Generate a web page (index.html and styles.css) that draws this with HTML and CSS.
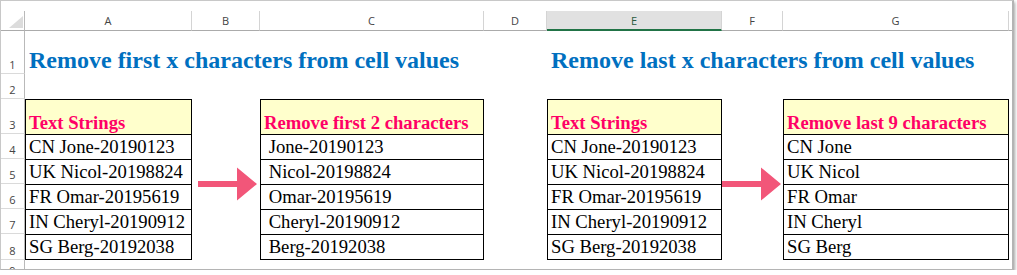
FILE: index.html
```html
<!DOCTYPE html>
<html>
<head>
<meta charset="utf-8">
<link rel="stylesheet" href="styles.css">
</head>
<body>
<div class="frame">
  <div class="topgap"></div>
  <div class="colhdr">
    <div class="ch corner"><div class="tri"></div></div>
    <div class="ch">A</div>
    <div class="ch">B</div>
    <div class="ch">C</div>
    <div class="ch">D</div>
    <div class="ch sel">E</div>
    <div class="ch">F</div>
    <div class="ch">G</div>
    <div class="ch rest"></div>
  </div>
  <div class="sheet">
    <div class="rh r1">1</div>
    <div class="rh r2">2</div>
    <div class="rh r3">3</div>
    <div class="rh r4">4</div>
    <div class="rh r5">5</div>
    <div class="rh r6">6</div>
    <div class="rh r7">7</div>
    <div class="rh r8">8</div>
    <div class="rh r9">9</div>

    <div class="title t1">Remove first x characters from cell values</div>
    <div class="title t2">Remove last x characters from cell values</div>

    <div class="tbl ca">
      <div class="th">Text Strings</div>
      <div class="td">CN Jone-20190123</div>
      <div class="td">UK Nicol-20198824</div>
      <div class="td">FR Omar-20195619</div>
      <div class="td">IN Cheryl-20190912</div>
      <div class="td">SG Berg-20192038</div>
    </div>

    <svg class="arrow ab" width="68" height="50" viewBox="0 0 68 50"><path d="M6 22 H45 V8.5 L65 25 L45 41.5 V28 H6 Z" fill="#f25679"/></svg>

    <div class="tbl cc">
      <div class="th">Remove first 2 characters</div>
      <div class="td"> Jone-20190123</div>
      <div class="td"> Nicol-20198824</div>
      <div class="td"> Omar-20195619</div>
      <div class="td"> Cheryl-20190912</div>
      <div class="td"> Berg-20192038</div>
    </div>

    <div class="tbl ce">
      <div class="th">Text Strings</div>
      <div class="td">CN Jone-20190123</div>
      <div class="td">UK Nicol-20198824</div>
      <div class="td">FR Omar-20195619</div>
      <div class="td">IN Cheryl-20190912</div>
      <div class="td">SG Berg-20192038</div>
    </div>

    <svg class="arrow af" width="61" height="50" viewBox="0 0 61 50"><path d="M0 22 H39 V8.5 L59 25 L39 41.5 V28 H0 Z" fill="#f25679"/></svg>

    <div class="tbl cg">
      <div class="th">Remove last 9 characters</div>
      <div class="td">CN Jone</div>
      <div class="td">UK Nicol</div>
      <div class="td">FR Omar</div>
      <div class="td">IN Cheryl</div>
      <div class="td">SG Berg</div>
    </div>
  </div>
</div>
</body>
</html>
```
FILE: styles.css
```css
* { box-sizing: border-box; }

body {
  margin: 0;
  background: #ffffff;
}

.frame {
  --cols: 24px 167px 68px 224px 63px 175px 61px 226px 1fr;
  width: 1014px;
  height: 270px;
  border: 1px solid #c8c8c8;
  border-right: 2px solid #b4b4b4;
  border-bottom: 1px solid #b4b4b4;
  box-shadow: 1px 2px 3px rgba(0, 0, 0, 0.35);
  background: #ffffff;
  overflow: hidden;
}

.topgap {
  height: 10px;
}

.colhdr {
  display: grid;
  grid-template-columns: var(--cols);
  height: 20px;
}

.ch {
  border-right: 1px solid #d4d4d4;
  border-bottom: 1px solid #ababab;
  display: flex;
  align-items: center;
  justify-content: center;
  font-family: "Open Sans", "DejaVu Sans", sans-serif;
  font-size: 11px;
  line-height: 13px;
  color: #444444;
}

.ch.corner {
  border-right-color: #b9b9b9;
  justify-content: flex-end;
  align-items: flex-end;
  padding: 0 1px 2px 0;
}

.tri {
  width: 14px;
  height: 12px;
  background: #dcdcdc;
  clip-path: polygon(100% 0, 100% 100%, 0 100%);
}

.ch.sel {
  background: #e1e1e1;
  border-bottom: 2px solid #217346;
  color: #2b5b3d;
}

.ch.rest {
  border-right: none;
}

.sheet {
  display: grid;
  grid-template-columns: var(--cols);
  grid-template-rows: 43px 25px 35px 25px 25px 25px 25px 26px 20px;
}

.rh {
  grid-column: 1;
  border-right: 1px solid #b9b9b9;
  border-bottom: 1px solid #dadada;
  display: flex;
  align-items: flex-end;
  justify-content: center;
  padding-bottom: 2px;
  font-family: "Open Sans", "DejaVu Sans", sans-serif;
  font-size: 11px;
  line-height: 13px;
  color: #444444;
}

.r1 { grid-row: 1; }
.r2 { grid-row: 2; }
.r3 { grid-row: 3; }
.r4 { grid-row: 4; }
.r5 { grid-row: 5; }
.r6 { grid-row: 6; }
.r7 { grid-row: 7; }
.r8 { grid-row: 8; }
.r9 { grid-row: 9; }

.title {
  grid-row: 1;
  align-self: end;
  font-family: "Liberation Serif", Tinos, "Times New Roman", "DejaVu Serif", serif;
  font-weight: bold;
  font-size: 24px;
  line-height: 24px;
  color: #0070c0;
  white-space: nowrap;
  padding: 0 0 2px 4px;
}

.t1 { grid-column: 2 / 6; }
.t2 { grid-column: 6 / 10; }

.tbl {
  grid-row: 3 / 9;
  display: flex;
  flex-direction: column;
  border: 1px solid #000000;
  font-family: "Liberation Serif", Tinos, "Times New Roman", "DejaVu Serif", serif;
  font-size: 18.67px;
}

.ca { grid-column: 2; }
.cc { grid-column: 4; }
.ce { grid-column: 6; }
.cg { grid-column: 8; }

.th {
  height: 34px;
  background: #ffffcc;
  color: #ff0066;
  font-weight: bold;
  display: flex;
  align-items: flex-end;
  padding: 0 0 1px 3px;
  line-height: 20px;
  white-space: nowrap;
}

.td {
  height: 25px;
  border-top: 1px solid #000000;
  display: flex;
  align-items: flex-end;
  padding: 0 0 2px 3px;
  line-height: 20px;
  white-space: pre;
  color: #000000;
}

.arrow {
  grid-row: 5 / 7;
  display: block;
}

.ab { grid-column: 3; }
.af { grid-column: 7; }
```
